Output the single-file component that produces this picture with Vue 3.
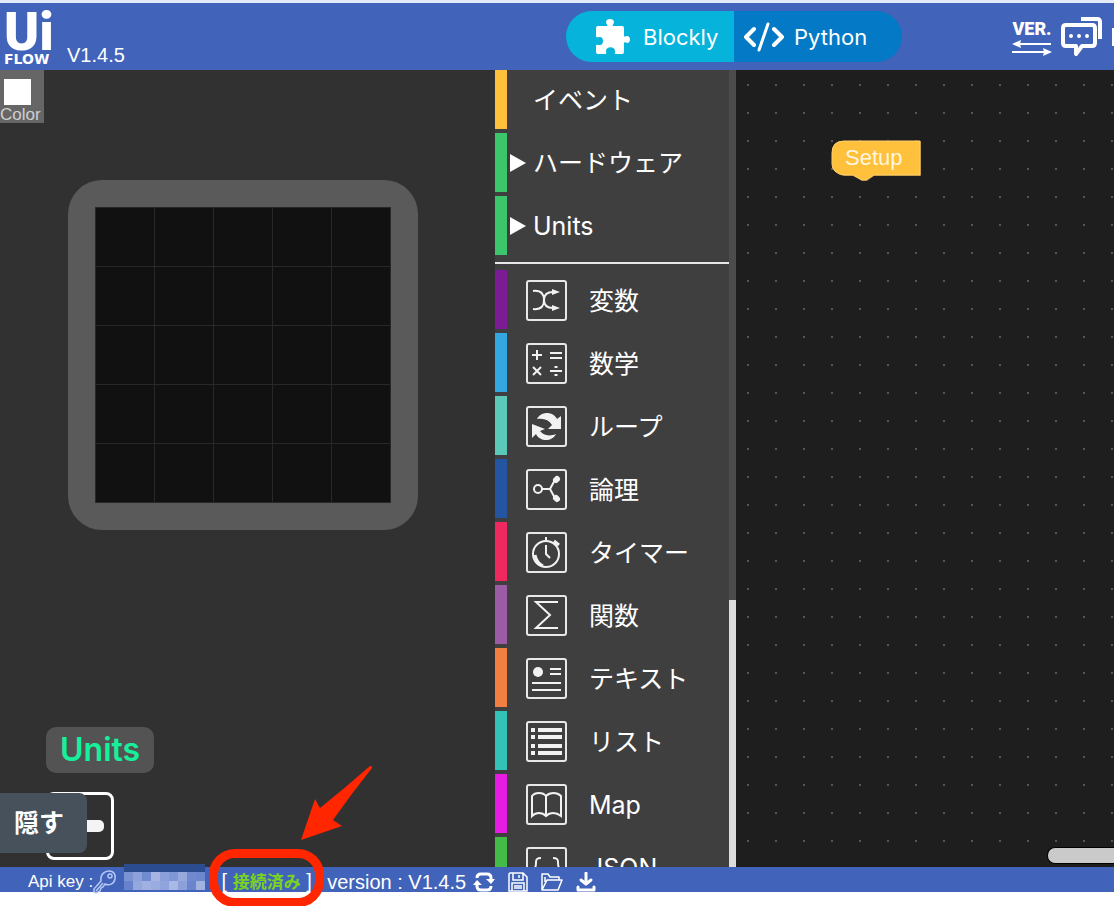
<script setup>
import {ref} from 'vue'

const mode = ref('blockly')

const groups = [
  {id: 'event', label: 'イベント', color: '#ffc03b', arrow: false},
  {id: 'hardware', label: 'ハードウェア', color: '#3dc56c', arrow: true},
  {id: 'units', label: 'Units', color: '#3dc56c', arrow: true}
]

const categories = [
  {
    id: 'variables', label: '変数', color: '#7c1c94',
    icon: '<path d="M7 11c9-1 11 4 11 9s-2 10-11 9M29 12h-2c-7 0-9 4-9 8s2 8 9 8h2"/><path fill="currentColor" stroke="none" d="M26 9l8 3-8 3zM26 25l8 3-8 3z"/>'
  },
  {
    id: 'math', label: '数学', color: '#34a6e0',
    icon: '<path stroke-width="2" d="M6 12h10M11 7v10M24 10h12M24 15h12M7 24l8 8M15 24l-8 8M24 28h12"/><path stroke-width="3" d="M30 23v2M30 31v2"/>'
  },
  {
    id: 'loops', label: 'ループ', color: '#5cc8b7',
    icon: '<path fill="currentColor" stroke="none" d="M11 13C15 5 27 5 31 13l4-3v13H22l4-4c-3-5-8-7-15-6zM30 28C26 36 14 36 10 28l-4 4V18l13 5-5 2c3 4 9 6 16 3z"/>'
  },
  {
    id: 'logic', label: '論理', color: '#2455a0',
    icon: '<circle cx="12" cy="20" r="4"/><path stroke-width="2" d="M16 20h8L30 9M24 20l6 11"/><path stroke-width="6" stroke-linecap="round" d="M30 11l1-1M30 29l1 1"/>'
  },
  {
    id: 'timer', label: 'タイマー', color: '#ef285f',
    icon: '<circle cx="20" cy="22" r="13"/><path d="M20 5v4M20 13v9l4 4"/><path stroke-width="3" d="M28 9l5 4M9 23c1 5 4 9 8 11"/>'
  },
  {
    id: 'functions', label: '関数', color: '#9b5ba5',
    icon: '<path stroke-width="2" d="M32 7H10l14 13L10 33h22"/>'
  },
  {
    id: 'text', label: 'テキスト', color: '#f27f42',
    icon: '<circle cx="12" cy="14" r="5" fill="currentColor" stroke="none"/><path stroke-width="2" d="M24 11h11M24 16h11M6 25h29M6 32h29"/>'
  },
  {
    id: 'lists', label: 'リスト', color: '#35c2b6',
    icon: '<path stroke-width="4" d="M5 9h4M5 16h4M5 25h4M5 32h4M12 9h24M12 16h24M12 25h24M12 32h24"/>'
  },
  {
    id: 'map', label: 'Map', color: '#e61ce3',
    icon: '<path stroke-width="2" d="M20 12c-3-4-11-4-14 0v20c4-4 10-4 14 0 4-4 10-4 15 0V12c-4-4-11-4-15 0zM20 12v20"/>'
  },
  {
    id: 'json', label: 'JSON', color: '#43bb46',
    icon: '<path stroke-width="2" d="M15 11c-4 0-5 1-5 4 0 4 0 6-4 7 4 1 4 3 4 6s1 4 5 4M27 11c4 0 5 1 5 4 0 4 0 6 4 7-4 1-4 3-4 6s-1 4-5 4"/>'
  }
]

// masked api key
const mask = [
  ['#7b92d3', '#8da2db', '#718bd0', '#a6b5e2', '#8ba0da', '#7f97d6', '#97aade', '#7089cf', '#6c87cd'],
  ['#6882cc', '#94a8dd', '#a0b1e1', '#99acdf', '#8fa4dc', '#a9b8e4', '#8ca1da', '#6b85cd', '#a3b3e1']
]
</script>

<template>
  <div class="app">
    <header class="header">
      <div class="brand">
        <div class="logo"><b class="logo_ui">Ui</b><b class="logo_flow">FLOW</b></div>
        <span class="brand_version">V1.4.5</span>
      </div>
      <div class="modes">
        <button type="button" class="mode mode-blockly" :aria-pressed="mode === 'blockly'" @click="mode = 'blockly'">
          <svg width="36" height="36" viewBox="0 0 36 36" fill="currentColor">
            <path d="M1 9q0-2 2-2h8c3 0 0-2 0-4 0-4 8-4 8 0 0 2-3 4 0 4h8q2 0 2 2v7c0 3 2 1 3 1 4 0 4 7 0 7-1 0-3-2-3 1v8q0 2-2 2h-6c-2 0-1-1-1-3 0-5-9-5-9 0 0 2 1 3-1 3H3q-2 0-2-2v-6c0-2 2-1 4-1 4 0 4-8 0-8-2 0-4 1-4-1z"/>
          </svg>
          Blockly
        </button>
        <button type="button" class="mode mode-python" :aria-pressed="mode === 'python'" @click="mode = 'python'">
          <svg width="40" height="32" viewBox="0 0 40 32" fill="none" stroke="currentColor" stroke-width="4" stroke-linecap="round" stroke-linejoin="round">
            <path d="M10 8l-8 8 8 8M30 8l8 8-8 8"/>
            <path stroke-width="3" d="M24 3l-9 26"/>
          </svg>
          Python
        </button>
      </div>
      <div class="tools">
        <button type="button" class="tool tool-ver">
          <span>VER.</span>
          <svg width="40" height="16" viewBox="0 0 40 16" fill="currentColor" stroke="currentColor" stroke-width="2">
            <path fill="none" d="M4 4h35M0 12h35"/>
            <path stroke="none" d="M0 4l9-4-1 4 1 4zM40 12l-9-4 1 4-1 4z"/>
          </svg>
        </button>
        <button type="button" class="tool" aria-label="forum">
          <svg width="42" height="42" viewBox="0 0 42 42" fill="none" stroke="currentColor" stroke-width="4" stroke-linejoin="round">
            <path d="M5 9h26q3 0 3 3v15q0 3-3 3H21l-6 8v-8H5q-3 0-3-3V12q0-3 3-3z"/>
            <path d="M20 3h16q3 0 3 3v17"/>
            <path stroke-linecap="round" d="M10 20h0M18 20h0M26 20h0"/>
          </svg>
        </button>
        <span class="tool_next"></span>
      </div>
    </header>

    <main class="main">
      <section class="simulator">
        <button type="button" class="color_picker"><i></i>Color</button>
        <div class="device">
          <div class="matrix"><i v-for="n in 25" :key="n"></i></div>
        </div>
        <div class="units">
          <h2>Units</h2>
          <div class="unit_card"><i></i></div>
        </div>
        <button type="button" class="hide_btn">隠す</button>
      </section>

      <nav class="toolbox">
        <div class="toolbox_list">
          <button v-for="item in groups" :key="item.id" type="button" class="row row-group" :style="{'--tone': item.color}">
            <svg class="row_arrow" width="16" height="18" viewBox="0 0 16 18" fill="currentColor">
              <path v-if="item.arrow" d="M0 0l16 9-16 9z"/>
            </svg>
            <span>{{ item.label }}</span>
          </button>
          <hr>
          <button v-for="item in categories" :key="item.id" type="button" class="row row-category" :style="{'--tone': item.color}">
            <svg class="row_icon" viewBox="2 2 37 37" v-html="item.icon"></svg>
            <span>{{ item.label }}</span>
          </button>
        </div>
        <div class="toolbox_scroll"><i></i></div>
      </nav>

      <section class="workspace">
        <div class="block">
          <svg width="91" height="42" viewBox="0 0 91 42">
            <path fill="#8f7135" d="M13 1h77v35H43l-7 5h-5l-9-5h-9Q2 34 2 25V13Q2 2 13 1z"/>
            <path fill="#ffc03b" stroke="#ffd06b" d="M13 1h76v34H43l-8 5h-4l-9-5h-9Q1 33 1 24V13Q1 1 13 1z"/>
          </svg>
          <span>Setup</span>
        </div>
        <i class="workspace_scroll"></i>
      </section>
    </main>

    <footer class="footer">
      <span class="api">Api key :</span>
      <svg class="key" width="24" height="24" viewBox="0 0 24 24" fill="none" stroke="currentColor" stroke-width="1.5">
        <path d="M8 11C7 4 12 1 16 1c5 0 7 4 6 8-1 5-6 7-10 5l-2 3-2 1-1 3-4 2-2-1v-3z"/>
        <circle cx="17" cy="6" r="2"/>
        <path d="M10 13l-7 8"/>
      </svg>
      <div class="mask">
        <template v-for="(line, y) in mask" :key="y">
          <i v-for="(tone, x) in line" :key="x" :style="{background: tone}"></i>
        </template>
      </div>
      <div class="status">
        [ <b>接続済み</b> ]
        <svg class="arrow" width="76" height="78" viewBox="0 0 76 78">
          <path fill="#ff2600" d="M2 75L16 34l5 9Q46 23 71 1q3 0 2 2Q53 28 34 55l9 6z"/>
        </svg>
      </div>
      <span class="version">version : V1.4.5</span>
      <div class="actions">
        <button type="button" aria-label="refresh">
          <svg width="22" height="20" viewBox="0 0 22 20" fill="none" stroke="currentColor" stroke-width="3">
            <path d="M4 6q0-4 4-4h6q4 0 4 4v2M18 14q0 4-4 4H8q-4 0-4-4v-2"/>
            <path fill="currentColor" stroke="none" d="M13 7h9l-4 5zM0 13h9L4 8z"/>
          </svg>
        </button>
        <button type="button" aria-label="save">
          <svg width="20" height="20" viewBox="0 0 20 20" fill="none" stroke="currentColor" stroke-width="1.5">
            <path d="M2 1h13l4 4v14H1V2zM5 1v7h10V1M11 3v3M4 19v-8h12v8M6 14h8M6 16h8"/>
          </svg>
        </button>
        <button type="button" aria-label="open">
          <svg width="22" height="20" viewBox="0 0 22 20" fill="none" stroke="currentColor" stroke-width="1.5" stroke-linejoin="round">
            <path d="M1 18V2h6l2 3h9v3M1 18L6 8h15l-4 10zM4 10V5"/>
          </svg>
        </button>
        <button type="button" aria-label="download">
          <svg width="20" height="20" viewBox="0 0 20 20" fill="none" stroke="currentColor" stroke-width="3" stroke-linecap="round" stroke-linejoin="round">
            <path d="M10 1v10M2 15v3h16v-3"/>
            <path d="M5 8l5 4 5-4"/>
          </svg>
        </button>
      </div>
    </footer>
  </div>
</template>

<style>
body {
  margin: 0;
  background: #fff;
}
</style>

<style scoped>
.app {
  display: flex;
  flex-direction: column;
  box-sizing: border-box;
  height: 100vh;
  padding-bottom: 14px;
  overflow: hidden;
  color: #fff;
  font-family: "Liberation Sans", "Noto Sans CJK JP", sans-serif;
}

button {
  margin: 0;
  padding: 0;
  border: 0;
  color: inherit;
  background: none;
  font: inherit;
  cursor: pointer;
}

svg {
  display: block;
  flex: none;
}

.header {
  display: grid;
  grid-template-columns: 566fr 336px 212fr;
  align-items: center;
  box-sizing: border-box;
  flex: none;
  height: 70px;
  border-top: 3px solid #e4eaf8;
  background: #4163b9;
}

.brand {
  display: flex;
  align-items: flex-end;
  gap: 12px;
  padding: 2px 0 0 4px;
}

.logo {
  display: flex;
  flex-direction: column;
  width: 51px;
}

.logo_ui {
  font: 900 53px/42px Roboto, sans-serif;
}

.logo_flow {
  font: bold 14px/12px "DejaVu Sans", sans-serif;
}

.brand_version {
  font-size: 20px;
  line-height: 20px;
}

.modes {
  display: grid;
  grid-template-columns: 1fr 1fr;
  height: 51px;
  border-radius: 26px;
  overflow: hidden;
}

.mode {
  display: flex;
  align-items: center;
  font: 22px/28px Inter, sans-serif;
}

.mode-blockly {
  gap: 12px;
  padding-left: 29px;
  background: #05b3db;
}

.mode-python {
  gap: 10px;
  padding-left: 10px;
  background: #0479c5;
}

.tools {
  display: flex;
  align-items: center;
  justify-content: flex-end;
  gap: 9px;
}

.tool-ver {
  width: 40px;
  font: 900 18px/22px Roboto, sans-serif;
}

.tool_next {
  width: 2px;
  height: 18px;
  background: #fff;
}

.main {
  display: grid;
  grid-template-columns: 495fr 241px 378fr;
  grid-template-rows: minmax(0, 1fr);
  flex: 1;
  min-height: 0;
}

.simulator {
  position: relative;
  display: flex;
  flex-direction: column;
  align-items: flex-start;
  background: #313131;
}

.color_picker {
  display: flex;
  flex-direction: column;
  align-items: flex-start;
  gap: 1px;
  width: 44px;
  height: 53px;
  padding-top: 9px;
  box-sizing: border-box;
  color: #d0d0d0;
  background: #666;
  font-size: 17px;
  line-height: 17px;

  i {
    flex: none;
    width: 27px;
    height: 26px;
    margin-left: 4px;
    background: #fff;
  }
}

.device {
  margin: 57px 0 0 68px;
  padding: 27px;
  border-radius: 34px;
  background: #5a5a5a;
}

.matrix {
  display: grid;
  grid-template-columns: repeat(5, 58px);
  grid-auto-rows: 58px;
  gap: 1px;
  padding: 1px;
  background: #282828;

  i {
    background: #111;
  }
}

.units {
  display: flex;
  flex-direction: column;
  align-items: flex-start;
  gap: 19px;
  margin: auto 0 7px 46px;

  h2 {
    margin: 0;
    padding: 0 14px;
    border-radius: 10px;
    color: #17f09a;
    background: #535353;
    font: 600 32px/46px Inter, sans-serif;
  }
}

.unit_card {
  display: flex;
  align-items: center;
  justify-content: flex-end;
  box-sizing: border-box;
  width: 68px;
  height: 68px;
  padding-right: 7px;
  border: 3px solid #fff;
  border-radius: 8px;

  i {
    width: 22px;
    height: 12px;
    border-radius: 5px;
    background: #f4f4f4;
  }
}

.hide_btn {
  position: absolute;
  left: 0;
  bottom: 14px;
  width: 87px;
  height: 60px;
  padding: 0 9px 4px 0;
  border-radius: 0 8px 8px 0;
  background: #46515c;
  font-size: 25px;
  font-weight: bold;
}

.toolbox {
  display: flex;
  background: #3f3f3f;
  font: 25px/32px Inter, "Noto Sans CJK JP", sans-serif;
}

.toolbox_list {
  flex: 1;
  overflow: hidden;

  hr {
    height: 2px;
    margin: 7px 0 6px;
    border: 0;
    background: #e8e8e8;
  }
}

.row {
  display: flex;
  align-items: center;
  box-sizing: border-box;
  width: 100%;
  height: 59px;
  margin-bottom: 4px;
  border-left: 12px solid var(--tone);
}

/* the rule brings its own spacing */
.row:has(+ hr) {
  margin-bottom: 0;
}

.row-group {
  gap: 7px;
  padding-left: 3px;
}

.row-category {
  gap: 22px;
  padding: 2px 0 0 19px;
}

.row_icon {
  box-sizing: border-box;
  width: 41px;
  height: 41px;
  border: 2px solid #e8e8e8;
  border-radius: 3px;
  color: #f2f2f2;
  fill: none;
  stroke: currentColor;
  stroke-width: 2px;
}

.toolbox_scroll {
  display: flex;
  align-items: flex-end;
  width: 7px;
  background: #4c4c4c;

  i {
    width: 100%;
    height: 33.5%;
    background: #dcdcdc;
  }
}

.workspace {
  position: relative;
  overflow: hidden;
  background: #1e1e1e radial-gradient(circle at 12px 15px, #555 0 1px, transparent 1px) 0 0 / 28px 28px;
}

.block {
  position: absolute;
  left: 95px;
  top: 70px;

  span {
    position: absolute;
    left: 14px;
    top: 4px;
    color: #fff6df;
    font-size: 22px;
    line-height: 28px;
  }
}

.workspace_scroll {
  position: absolute;
  right: 0;
  bottom: 3px;
  width: 66px;
  height: 15px;
  border: 1px solid #000;
  border-right: 0;
  border-radius: 8px 0 0 8px;
  background: #cacaca;
}

.footer {
  display: flex;
  align-items: center;
  box-sizing: border-box;
  flex: none;
  height: 25px;
  padding: 4px 0 0 28px;
  background: #4163b9;
  white-space: nowrap;
  line-height: 20px;
}

.api {
  font-size: 17px;
}

.key {
  color: #b5c7f5;
}

.mask {
  display: grid;
  grid-template-columns: repeat(9, 9px);
  grid-auto-rows: 9px;
  position: relative;
  top: -5px;
  margin-left: 7px;
  border-top: 8px solid #2c4c90;
}

.status {
  position: relative;
  box-sizing: border-box;
  width: 115px;
  margin: 0 3px 0 4px;
  font-size: 20px;
  text-align: center;

  b {
    color: #7bd321;
    font-size: 17px;
  }

  /* highlight ring */
  &::after {
    content: "";
    position: absolute;
    inset: -22px 0 -14px;
    border: 9px solid #ff2600;
    border-radius: 26px;
  }
}

.arrow {
  position: absolute;
  left: 90px;
  bottom: 50px;
}

.version {
  font-size: 20px;
}

.actions {
  display: flex;
  gap: 13px;
  margin-left: 7px;
}
</style>
